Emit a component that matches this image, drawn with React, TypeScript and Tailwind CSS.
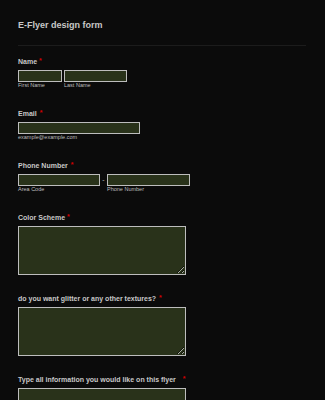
const font = { fontFamily: '"Liberation Sans", Arial, sans-serif' };

function Label({ text, gap = "ml-[2px]" }: { text: string; gap?: string }) {
  return (
    <div className="flex items-start h-[8px] leading-[8px] text-[7px] font-bold text-[#c8c8c8] whitespace-nowrap">
      <span>{text}</span>
      <span className={`${gap} text-[#d40000] font-bold text-[7px] leading-[6px]`}>*</span>
    </div>
  );
}

function Input({ w }: { w: string }) {
  return <div className={`${w} h-[12px] border border-[#bdbdbd] bg-[#29321a]`} />;
}

function Sub({ text, w }: { text: string; w?: string }) {
  return (
    <div className={`${w ?? ""} h-[8px] leading-[7px] text-[5.5px] text-[#bdbdbd] whitespace-nowrap`}>
      {text}
    </div>
  );
}

function Area() {
  return (
    <div className="mt-[4px]">
      <textarea
        className="block w-[168px] h-[49px] border border-[#bdbdbd] bg-[#29321a] outline-none"
        aria-label="field"
      />
    </div>
  );
}

export default function App() {
  return (
    <div className="w-[325px] h-[400px] overflow-hidden bg-[#0b0b0b] pl-[18px] pr-[19px] pt-[19px]" style={font}>
      <h1 className="h-[12px] leading-[12px] text-[9px] font-bold text-[#c8c8c8]">E-Flyer design form</h1>
      <div className="mt-[14px] h-px bg-[#1c1c1c]" />

      {/* Name */}
      <div className="mt-[12px]">
        <Label text="Name" />
        <div className="mt-[4px] flex gap-[2px]">
          <div>
            <Input w="w-[44px]" />
            <Sub text="First Name" />
          </div>
          <div>
            <Input w="w-[63px]" />
            <Sub text="Last Name" />
          </div>
        </div>
      </div>

      {/* Email */}
      <div className="mt-[20px]">
        <Label text="Email" gap="ml-[3px]" />
        <div className="mt-[4px]">
          <Input w="w-[122px]" />
          <Sub text="example@example.com" />
        </div>
      </div>

      {/* Phone */}
      <div className="mt-[20px]">
        <Label text="Phone Number" gap="ml-[3px]" />
        <div className="mt-[4px] flex">
          <div>
            <Input w="w-[82px]" />
            <Sub text="Area Code" />
          </div>
          <div className="w-[7px] h-[12px] flex items-center justify-center text-[7px] text-[#bdbdbd]">-</div>
          <div>
            <Input w="w-[83px]" />
            <Sub text="Phone Number" />
          </div>
        </div>
      </div>

      {/* Color scheme */}
      <div className="mt-[20px]">
        <Label text="Color Scheme" />
        <Area />
      </div>

      <div className="mt-[20px]">
        <Label text="do you want glitter or any other textures?" gap="ml-[3px]" />
        <Area />
      </div>

      <div className="mt-[20px]">
        <Label text="Type all information you would like on this flyer" gap="ml-[7px]" />
        <Area />
      </div>
    </div>
  );
}
